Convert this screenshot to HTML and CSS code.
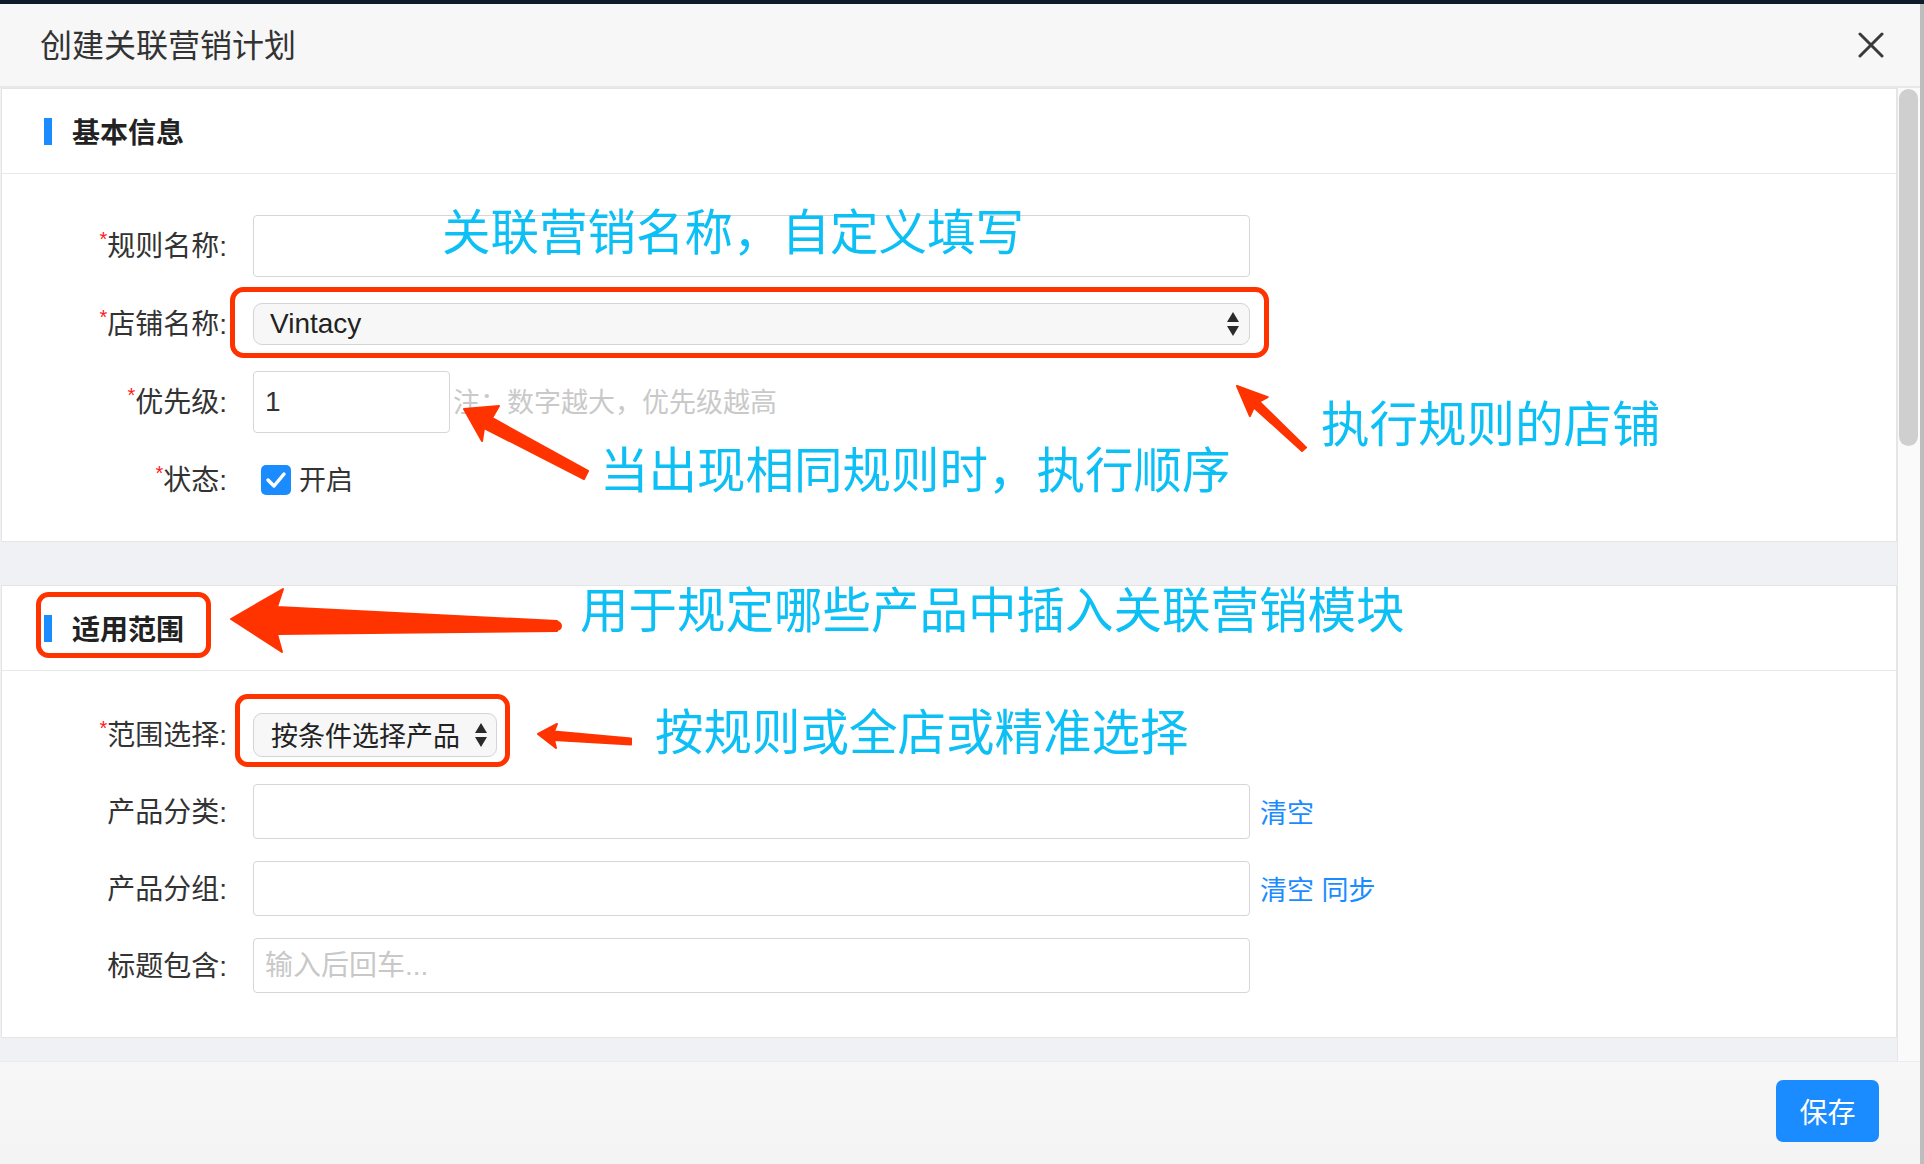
FILE: index.html
```
<!DOCTYPE html>
<html lang="zh-CN">
<head>
    <meta charset="UTF-8">
    <title>创建关联营销计划</title>
    <link rel="stylesheet" href="styles.css">
</head>
<body>

    <div class="topbar"></div>

    <div class="modal">
        <header class="modal-header">
            <h1 class="modal-title">创建关联营销计划</h1>
            <span class="close">
                <svg width="26" height="26" viewBox="0 0 26 26"><path d="M2 2 L24 24 M24 2 L2 24" stroke="#3a3a3a" stroke-width="3" stroke-linecap="round"/></svg>
            </span>
        </header>

        <div class="modal-main">
            <div class="modal-body">

                <section class="panel">
                    <div class="panel-head"><span class="mark"></span>基本信息</div>
                    <div class="panel-body base">
                        <div class="row">
                            <label class="label"><span class="req">*</span>规则名称:</label>
                            <div class="control"><input class="input wide" type="text"></div>
                        </div>
                        <div class="row">
                            <label class="label"><span class="req">*</span>店铺名称:</label>
                            <div class="control">
                                <div class="select wide">
                                    <span>Vintacy</span>
                                    <svg width="12" height="24" viewBox="0 0 12 24"><path d="M0 10 L6 0 L12 10 Z M0 14 L12 14 L6 24 Z" fill="#2a2a2a"/></svg>
                                </div>
                            </div>
                        </div>
                        <div class="row">
                            <label class="label"><span class="req">*</span>优先级:</label>
                            <div class="control">
                                <input class="input short" type="text" value="1">
                                <span class="hint">注：数字越大，优先级越高</span>
                            </div>
                        </div>
                        <div class="row">
                            <label class="label"><span class="req">*</span>状态:</label>
                            <div class="control">
                                <span class="checkbox">
                                    <svg width="30" height="30" viewBox="0 0 30 30"><path d="M7 15 L13 21 L23 9" fill="none" stroke="#fff" stroke-width="3.5" stroke-linecap="round" stroke-linejoin="round"/></svg>
                                </span>
                                <span class="check-text">开启</span>
                            </div>
                        </div>
                    </div>
                </section>

                <section class="panel scope">
                    <div class="panel-head"><span class="mark"></span>适用范围</div>
                    <div class="panel-body range">
                        <div class="row">
                            <label class="label"><span class="req">*</span>范围选择:</label>
                            <div class="control">
                                <div class="select small">
                                    <span>按条件选择产品</span>
                                    <svg width="12" height="24" viewBox="0 0 12 24"><path d="M0 10 L6 0 L12 10 Z M0 14 L12 14 L6 24 Z" fill="#2a2a2a"/></svg>
                                </div>
                            </div>
                        </div>
                        <div class="row">
                            <label class="label">产品分类:</label>
                            <div class="control">
                                <input class="input wide" type="text">
                                <a class="link">清空</a>
                            </div>
                        </div>
                        <div class="row">
                            <label class="label">产品分组:</label>
                            <div class="control">
                                <input class="input wide" type="text">
                                <a class="link">清空 同步</a>
                            </div>
                        </div>
                        <div class="row">
                            <label class="label">标题包含:</label>
                            <div class="control"><input class="input wide" type="text" placeholder="输入后回车..."></div>
                        </div>
                    </div>
                </section>

            </div>
            <div class="scrollbar"><div class="thumb"></div></div>
        </div>

        <footer class="modal-footer">
            <button class="btn-save">保存</button>
        </footer>
    </div>

    <!-- annotations drawn over the screenshot -->
    <div class="notes">
        <svg class="marks" width="1924" height="1164" viewBox="0 0 1924 1164">
            <g fill="none" stroke="#ff3300" stroke-width="5">
                <rect x="232.5" y="289.5" width="1034" height="66" rx="11"/>
                <rect x="38.5" y="594.5" width="170" height="61" rx="10"/>
                <rect x="237.5" y="696.5" width="270" height="68" rx="10"/>
            </g>
            <g fill="#ff3300" stroke="#ff3300" stroke-width="2" stroke-linejoin="round">
                <polygon points="1237,386 1267.7,397.1 1259.3,401.6 1306,447.5 1302,451 1253.9,407.4 1249.9,416.1"/>
                <polygon points="464,409 499,406 492,418 588,471 584,479 484,428 482,441"/>
                <polygon points="231,619 283,589 277,607 557,621 557,631 277,634 282,652"/>
                <circle cx="557" cy="626" r="4"/>
                <polygon points="538,734 557,724 554,731.5 631,738.5 631,744.5 554,740 556,748"/>
            </g>
        </svg>
        <div class="note n1">关联营销名称，自定义填写</div>
        <div class="note n2">执行规则的店铺</div>
        <div class="note n3">当出现相同规则时，执行顺序</div>
        <div class="note n4">用于规定哪些产品中插入关联营销模块</div>
        <div class="note n5">按规则或全店或精准选择</div>
    </div>

</body>
</html>
```

FILE: styles.css
```
body {
    font-family: 'Liberation Sans', 'Noto Sans CJK SC', sans-serif;
    background: #bdbdbd;
    margin: 0;
    padding: 0;
    width: 1924px;
    height: 1164px;
    overflow: hidden;
    position: relative;
    color: #333;
}

.topbar {
    height: 4px;
    background: #0e1b2b;
}

.modal {
    width: 1920px;
    height: 1160px;
    display: flex;
    flex-direction: column;
    background: #f7f7f7;
}

.modal-header {
    height: 84px;
    box-sizing: border-box;
    border-bottom: 2px solid #e8e8e8;
    padding: 0 36px 4px 40px;
    display: flex;
    align-items: center;
    justify-content: space-between;
}

.modal-title {
    margin: 0;
    font-size: 32px;
    font-weight: normal;
    color: #333;
}

.close {
    display: flex;
    margin-top: 4px;
}

.modal-main {
    height: 973px;
    display: flex;
}

.modal-body {
    width: 1897px;
    background: #f0f1f5;
    padding: 0 0 22px 1px;
    box-sizing: border-box;
}

.scrollbar {
    flex: 1;
    background: #fafafa;
    border-left: 1px solid #e6e6e6;
    padding: 1px 2px 0 1px;
}

.thumb {
    height: 357px;
    background: #cfcfcf;
    border-radius: 10px;
}

.panel {
    background: white;
    border: 1px solid #e5e5e5;
}

.panel.scope {
    margin-top: 43px;
}

.panel-head {
    height: 84px;
    border-bottom: 1px solid #e8e8e8;
    display: flex;
    align-items: center;
    padding-left: 42px;
    font-size: 28px;
    font-weight: bold;
    color: #222;
}

.mark {
    width: 8px;
    height: 27px;
    background: #1a8cff;
    margin-right: 20px;
}

.panel-body {
    display: flex;
    flex-direction: column;
}

.panel-body.base {
    padding: 41px 0 30px;
    gap: 16px;
}

.panel-body.base .row {
    height: 62px;
}

.panel-body.range {
    padding: 36px 0 44px;
    gap: 22px;
}

.panel-body.range .row {
    height: 55px;
}

.row {
    display: grid;
    grid-template-columns: 225px auto;
    column-gap: 26px;
    align-items: center;
}

.label {
    text-align: right;
    font-size: 28px;
    color: #333;
    white-space: nowrap;
    margin-top: -4px;
}

.req {
    color: #ff1a1a;
    font-size: 20px;
    vertical-align: 10px;
}

.control {
    display: flex;
    align-items: center;
    height: 100%;
}

.input {
    box-sizing: border-box;
    height: 100%;
    border: 1px solid #d6d6d6;
    border-radius: 4px;
    padding: 0 11px;
    font-family: 'Liberation Sans', 'Noto Sans CJK SC', sans-serif;
    font-size: 28px;
    color: #333;
    background: white;
    outline: none;
}

.input::placeholder {
    color: #c8c8c8;
}

.input.wide {
    width: 997px;
}

.input.short {
    width: 197px;
}

.hint {
    margin: -4px 0 0 3px;
    font-size: 27px;
    color: #c9c9c9;
    white-space: nowrap;
}

.select {
    box-sizing: border-box;
    display: flex;
    align-items: center;
    justify-content: space-between;
    background: #f7f7f7;
    border: 1px solid #d4d4d4;
    border-radius: 9px;
    font-size: 28px;
    color: #222;
}

.select.wide {
    width: 997px;
    height: 42px;
    padding: 0 10px 0 16px;
}

.select.small {
    width: 244px;
    height: 44px;
    padding: 0 9px 0 17px;
    font-size: 27px;
}

.checkbox {
    width: 30px;
    height: 30px;
    margin-left: 8px;
    background: #1a8cff;
    border-radius: 5px;
    display: flex;
}

.check-text {
    margin: -4px 0 0 8px;
    font-size: 27px;
}

.link {
    margin-left: 10px;
    font-size: 27px;
    color: #1a8cff;
    white-space: nowrap;
    cursor: pointer;
}

.modal-footer {
    flex: 1;
    border-top: 1px solid #ececec;
    background: linear-gradient(#f7f7f7, #f4f4f4);
    display: flex;
    justify-content: flex-end;
    align-items: flex-start;
    padding: 18px 41px 0 0;
}

.btn-save {
    width: 103px;
    height: 62px;
    border: none;
    border-radius: 7px;
    background: #1a8cff;
    color: white;
    font-family: 'Liberation Sans', 'Noto Sans CJK SC', sans-serif;
    font-size: 28px;
    cursor: pointer;
}

.notes {
    position: absolute;
    top: 0;
    left: 0;
    width: 1924px;
    height: 1164px;
    pointer-events: none;
}

.marks {
    position: absolute;
    top: 0;
    left: 0;
}

.note {
    position: absolute;
    font-family: 'Noto Sans CJK SC', sans-serif;
    font-weight: 400;
    font-size: 48.5px;
    line-height: 1;
    color: #0cbff4;
    white-space: nowrap;
}

.n1 { left: 442px; top: 205px; }
.n2 { left: 1321px; top: 397px; }
.n3 { left: 600px; top: 443px; }
.n4 { left: 580px; top: 583px; }
.n5 { left: 655px; top: 705px; }
```
